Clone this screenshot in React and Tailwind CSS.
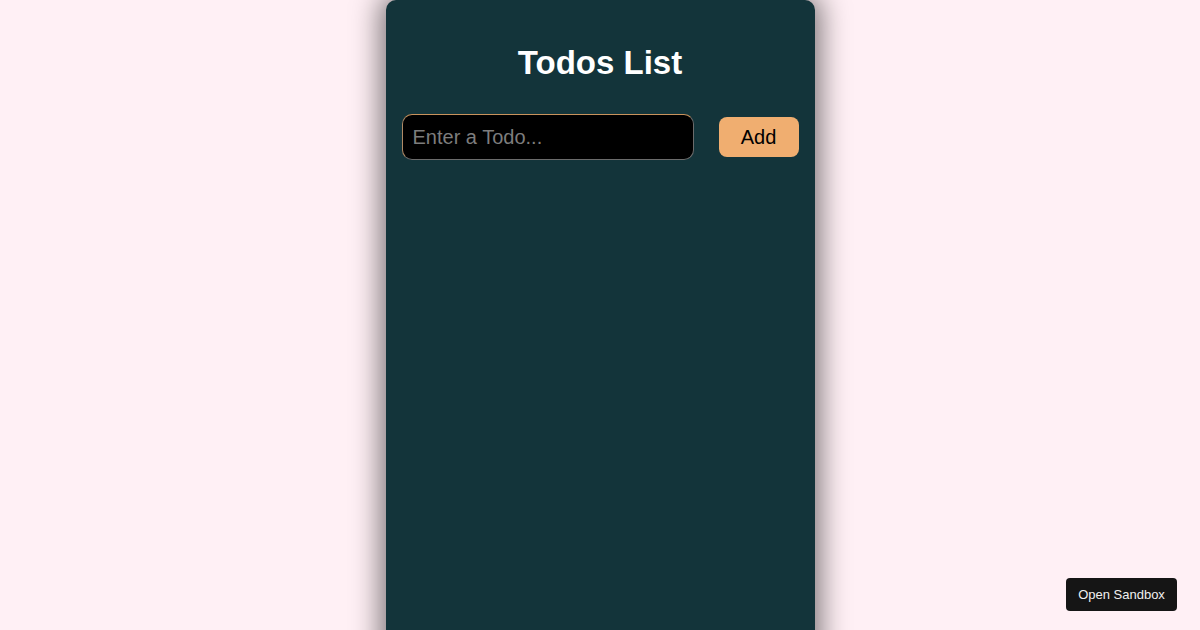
import { useState } from "react";

export default function App() {
  const [todo, setTodo] = useState("");

  return (
    <div className="relative h-screen overflow-hidden bg-[#fff0f5] font-['Liberation_Sans',Arial,sans-serif]">
      <div className="mx-auto w-[429px] h-[680px] rounded-[10px] bg-[#13343a] px-4 pt-[39px] shadow-[0_0_28px_6px_rgba(0,0,0,0.5)]">
        <h1 className="text-center text-[33px] leading-[48px] font-bold text-white">
          Todos List
        </h1>

        <div className="mt-[27px] flex items-center justify-between">
          <input
            value={todo}
            onChange={(e) => setTodo(e.target.value)}
            placeholder="Enter a Todo..."
            className="w-[292px] h-[46px] rounded-[10px] border border-t-[#c8925c] border-l-[#b08a66] border-r-[#6b6b6b] border-b-[#6b6b6b] bg-black px-[10px] text-[20px] text-white placeholder:text-[#7d7d7d] outline-none"
          />
          <button className="w-[80px] h-[40px] rounded-[8px] bg-[#f0ae70] text-[20px] text-black">
            Add
          </button>
        </div>
      </div>

      <button className="absolute right-[23px] bottom-[19px] h-[33px] w-[111px] rounded-[4px] bg-[#151515] text-[13px] text-[#f0f0f0]">
        Open Sandbox
      </button>
    </div>
  );
}
